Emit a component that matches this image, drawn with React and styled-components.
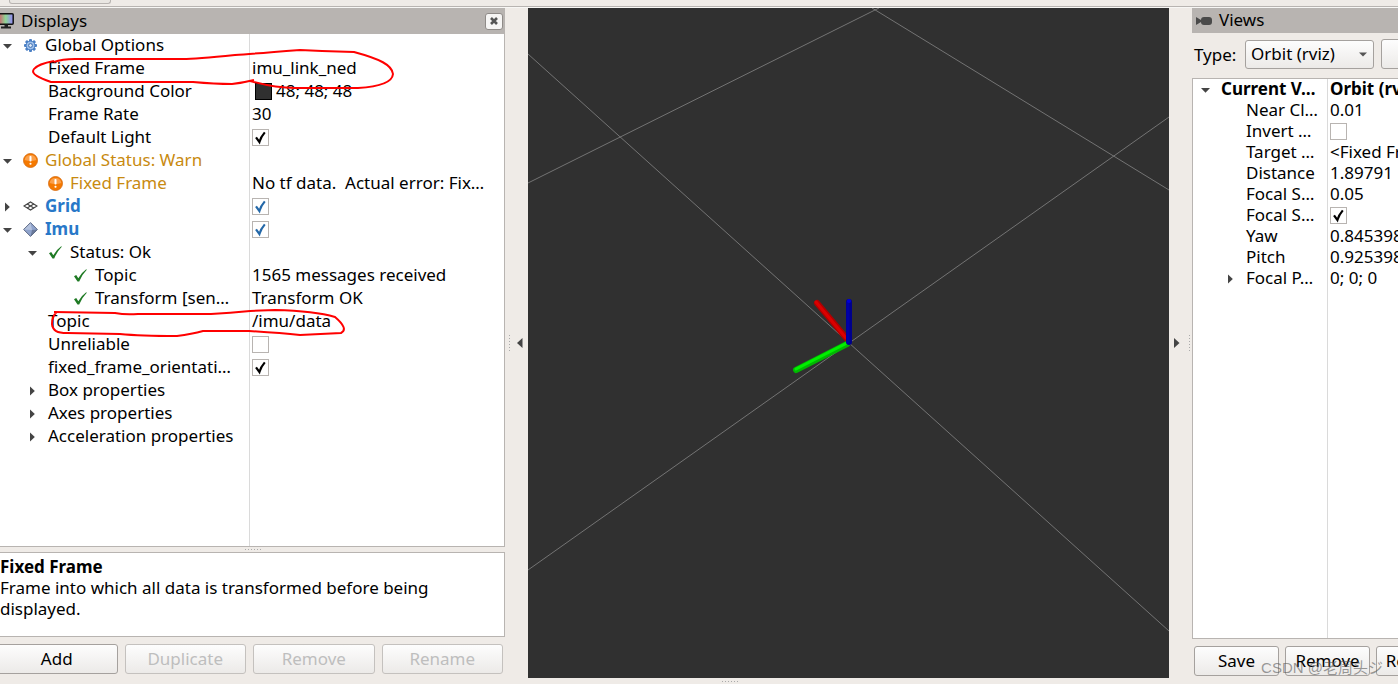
import { useState } from 'react'
import styled, { createGlobalStyle } from 'styled-components'

const displayRows = [
  { depth: 0, branch: 'open', icon: 'gear', name: 'Global Options' },
  { depth: 1, name: 'Fixed Frame', value: 'imu_link_ned' },
  { depth: 1, name: 'Background Color', value: '48; 48; 48', swatch: true },
  { depth: 1, name: 'Frame Rate', value: '30' },
  { depth: 1, name: 'Default Light', checkbox: true, checked: true },
  { depth: 0, branch: 'open', icon: 'warn', name: 'Global Status: Warn', tone: 'warn' },
  { depth: 1, icon: 'warn', name: 'Fixed Frame', tone: 'warn', value: 'No tf data.  Actual error: Fix…' },
  { depth: 0, branch: 'closed', icon: 'grid', name: 'Grid', tone: 'display', checkbox: true, checked: true },
  { depth: 0, branch: 'open', icon: 'imu', name: 'Imu', tone: 'display', checkbox: true, checked: true },
  { depth: 1, branch: 'open', icon: 'ok', name: 'Status: Ok' },
  { depth: 2, icon: 'ok', name: 'Topic', value: '1565 messages received' },
  { depth: 2, icon: 'ok', name: 'Transform [sen…', value: 'Transform OK' },
  { depth: 1, name: 'Topic', value: '/imu/data' },
  { depth: 1, name: 'Unreliable', checkbox: true, checked: false },
  { depth: 1, name: 'fixed_frame_orientati…', checkbox: true, checked: true },
  { depth: 1, branch: 'closed', name: 'Box properties' },
  { depth: 1, branch: 'closed', name: 'Axes properties' },
  { depth: 1, branch: 'closed', name: 'Acceleration properties' },
]

const viewRows = [
  { depth: 0, branch: 'open', name: 'Current V…', value: 'Orbit (rviz)', tone: 'current' },
  { depth: 1, name: 'Near Cl…', value: '0.01' },
  { depth: 1, name: 'Invert …', checkbox: true, checked: false },
  { depth: 1, name: 'Target …', value: '<Fixed Frame>' },
  { depth: 1, name: 'Distance', value: '1.89791' },
  { depth: 1, name: 'Focal S…', value: '0.05' },
  { depth: 1, name: 'Focal S…', checkbox: true, checked: true },
  { depth: 1, name: 'Yaw', value: '0.845398' },
  { depth: 1, name: 'Pitch', value: '0.925398' },
  { depth: 1, branch: 'closed', name: 'Focal P…', value: '0; 0; 0' },
]

const teeth = [0, 45, 90, 135, 180, 225, 270, 315]

function RowIcon({ type }) {
  if (type === 'gear') {
    return (
      <Icon viewBox="0 0 15 15">
        <g fill="#4a7fc4">
          {teeth.map((a) => (
            <rect key={a} x="6" y="1" width="3" height="4" rx="1" transform={`rotate(${a} 7.5 7.5)`} />
          ))}
        </g>
        <circle cx="7.5" cy="7.5" r="4.4" fill="#9fc0ea" stroke="#4a7fc4" strokeWidth="1" />
        <circle cx="7.5" cy="7.5" r="1.9" fill="#e4eefa" stroke="#3a6cb0" strokeWidth="1" />
      </Icon>
    )
  }
  if (type === 'warn') {
    return (
      <Icon viewBox="0 0 15 15">
        <circle cx="7.5" cy="7.5" r="7" fill="#f57900" stroke="#d66a0c" strokeWidth="0.8" />
        <path d="M1.6 7A6 6 0 0 1 13.4 7Q7.5 9 1.6 7Z" fill="#fba04a" />
        <rect x="6.5" y="3" width="2" height="5.6" rx="0.8" fill="#fff" />
        <rect x="6.5" y="9.8" width="2" height="2" rx="0.8" fill="#fff" />
      </Icon>
    )
  }
  if (type === 'grid') {
    return (
      <Icon viewBox="0 0 15 15" fill="none" stroke="#444" strokeWidth="1.2">
        <path d="M1 7 7.5 3 14 7 7.5 11Z" />
        <path d="M4.2 5 10.8 9M10.8 5 4.2 9" />
      </Icon>
    )
  }
  if (type === 'imu') {
    return (
      <Icon viewBox="0 0 15 15">
        <path d="M7.5 0.6 14.4 7.5 7.5 14.4 0.6 7.5Z" fill="#8fa3cc" />
        <path d="M7.5 0.6 9 8 0.6 7.5Z" fill="#b4c2de" />
        <path d="M9 8 14.4 7.5 7.5 14.4Z" fill="#6a7a9c" />
        <path d="M7.5 0.6 14.4 7.5 7.5 14.4 0.6 7.5Z" fill="none" stroke="#55617c" strokeWidth="0.9" />
      </Icon>
    )
  }
  return (
    <Icon viewBox="0 0 15 15">
      <path d="M1 8.2 3.2 7 5.3 10.2Q8.6 4.4 13.2 1.2L13.8 1.8Q9.2 6.4 6.2 13.4H4.5Z" fill="#1f7a24" />
    </Icon>
  )
}

function Check({ label, defaultChecked, tone }) {
  const [on, setOn] = useState(defaultChecked)
  return (
    <CheckCell>
      <CheckInput type="checkbox" aria-label={label} checked={on} onChange={(e) => setOn(e.target.checked)} />
      {on && (
        <CheckMark viewBox="0 0 17 17" $tone={tone}>
          <path d="M4 8.4 7.4 13Q8.8 8 12.8 3.4" />
        </CheckMark>
      )}
    </CheckCell>
  )
}

function PropertyTree({ rows, label, ...layout }) {
  return (
    <Tree {...layout}>
      <TreeTable aria-label={label}>
        <colgroup>
          <NameCol $width={layout.$split} />
          <col />
        </colgroup>
        <tbody>
          {rows.map((row, i) => (
            <TreeRow key={i} $height={layout.$row}>
              <td>
                <NameCell $depth={row.depth} $tone={row.tone}>
                  <Branch $width={layout.$branch}>
                    {row.branch && (
                      <BranchButton aria-label={`Toggle ${row.name}`}>
                        <svg width="10" height="10" viewBox="0 0 10 10" fill="#444">
                          <path d={row.branch === 'open' ? 'M0 3H9L4.5 7.8Z' : 'M2 0.5V9.5L6.8 5Z'} />
                        </svg>
                      </BranchButton>
                    )}
                  </Branch>
                  {row.icon && <RowIcon type={row.icon} />}
                  <CellText>{row.name}</CellText>
                </NameCell>
              </td>
              <td>
                <ValueCell $tone={row.tone}>
                  {row.checkbox && <Check label={row.name} defaultChecked={row.checked} tone={row.tone} />}
                  {row.swatch && <Swatch />}
                  {row.value && <CellText>{row.value}</CellText>}
                </ValueCell>
              </td>
            </TreeRow>
          ))}
        </tbody>
      </TreeTable>
    </Tree>
  )
}

function RenderView() {
  return (
    <Viewport viewBox="0 0 641 670" preserveAspectRatio="xMidYMid slice" role="img" aria-label="3D view">
      <g stroke="#858585" strokeWidth="0.8">
        <path d="M0 46 641 623M0 562 641 109M0 175 351 0M344 0 641 182" />
      </g>
      <g strokeLinecap="round" strokeWidth="6">
        <path d="M289 295 319 331" stroke="#b00000" />
        <path d="M288 294 318 330" stroke="#dc0000" strokeWidth="3" />
        <path d="M268 362 319 336" stroke="#00b800" />
        <path d="M268 361 319 335" stroke="#00f000" strokeWidth="3" />
        <path d="M321 294V334" stroke="#00008c" />
        <path d="M320 294V334" stroke="#0000a8" strokeWidth="3" />
        <circle cx="321" cy="293" r="2" fill="#0000d8" />
      </g>
    </Viewport>
  )
}

export default function App() {
  return (
    <Window>
      <GlobalStyle />
      <ToolbarEdge>
        <ToolbarTab />
      </ToolbarEdge>
      <Workspace>
        <Dock>
          <DockTitle $tall>
            <svg width="15" height="17" viewBox="0 0 15 17">
              <defs>
                <linearGradient id="screen">
                  <stop offset="0.1" stopColor="#c86a70" />
                  <stop offset="0.5" stopColor="#8fd694" />
                  <stop offset="0.9" stopColor="#9494e8" />
                </linearGradient>
              </defs>
              <rect x="-2" y="0.8" width="15.2" height="10.4" rx="1" fill="url(#screen)" stroke="#111" strokeWidth="1.5" />
              <path d="M4.5 11.5H8V13.5H11V15.5H1V13.5H4.5Z" fill="#222" />
            </svg>
            <h2>Displays</h2>
            <CloseButton aria-label="Close displays">
              <svg width="8" height="8" viewBox="0 0 8 8" stroke="#555" strokeWidth="2.6">
                <path d="M1 1 7 7M7 1 1 7" />
              </svg>
            </CloseButton>
          </DockTitle>
          <PropertyTree rows={displayRows} label="Displays" $split={249} $row={23} $branch={23} $arrow={3} />
          <Splitter>
            <Dots />
          </Splitter>
          <Description>
            <strong>Fixed Frame</strong>
            <p>Frame into which all data is transformed before being displayed.</p>
          </Description>
          <DisplayButtons>
            <Button>Add</Button>
            <Button disabled>Duplicate</Button>
            <Button disabled>Remove</Button>
            <Button disabled>Rename</Button>
          </DisplayButtons>
          <Annotation viewBox="0 0 505 676">
            <path d="M54 53Q38 56 34 61C30 66 40 70 51 74L193 74Q215 76 232 76Q242 75 254 72M250 73Q275 80 295 80L358 80Q392 78 393 66C392 57 380 51 354 44L322 43 300 42Q250 46 235 47Q195 51 183 51L75 51Q62 51 54 54" />
            <path d="M57 304Q52 308 52 316C53 323 57 325 67 325L120 326Q140 328 177 328Q192 326 203 323L249 323Q280 325 300 327L341 325Q349 321 335 309Q315 303 275 302L250 303Q230 305 211 306L138 306Q125 307 115 305L54 304" />
          </Annotation>
        </Dock>
        <Handle $side="left">
          <svg width="6" height="10" viewBox="0 0 6 10" fill="#444">
            <path d="M5.5 0V10L0 5Z" />
          </svg>
        </Handle>
        <Center>
          <RenderView />
        </Center>
        <Handle $side="right">
          <svg width="6" height="10" viewBox="0 0 6 10" fill="#444">
            <path d="M0 0V10L5.5 5Z" />
          </svg>
        </Handle>
        <Dock>
          <DockTitle $inset>
            <svg width="17" height="10" viewBox="0 0 17 10" fill="#4a4a4a">
              <path d="M0 1 5 4V6L0 9Z" />
              <rect x="5" y="1" width="11" height="8" rx="3" />
            </svg>
            <h2>Views</h2>
          </DockTitle>
          <TypeRow>
            <label htmlFor="view-type">Type:</label>
            <SelectBox>
              <Select id="view-type" defaultValue="orbit">
                <option value="orbit">Orbit (rviz)</option>
              </Select>
              <svg width="8" height="5" viewBox="0 0 8 5" fill="#555">
                <path d="M0 0.5H8L4 4.5Z" />
              </svg>
            </SelectBox>
            <Button>Zero</Button>
          </TypeRow>
          <PropertyTree rows={viewRows} label="Current view" $framed $split={134} $row={21} $branch={28} $arrow={8} />
          <ViewButtons>
            <Button>Save</Button>
            <Button>Remove</Button>
            <Button>Rename</Button>
          </ViewButtons>
        </Dock>
      </Workspace>
      <BottomEdge>
        <Dots />
      </BottomEdge>
      <Watermark>CSDN @老周头ジ</Watermark>
    </Window>
  )
}

const GlobalStyle = createGlobalStyle`
  * {
    box-sizing: border-box;
  }
  body {
    margin: 0;
    background: #efebe7;
    color: #000;
    font-family: "Noto Sans", "Noto Sans CJK SC", sans-serif;
    font-size: 17px;
    line-height: 21px;
  }
  button, select, input {
    font: inherit;
    color: inherit;
    margin: 0;
  }
  h2, p {
    margin: 0;
    font-size: 17px;
    font-weight: 400;
  }
  svg {
    display: block;
    flex: none;
  }
`

const Window = styled.div`
  position: relative;
  display: flex;
  flex-direction: column;
  min-height: 100vh;
  overflow: hidden;
`

const ToolbarEdge = styled.div`
  height: 8px;
  padding-left: 9px;
  border-bottom: 1px solid #f8f7f5;
  box-shadow: inset 0 -1px #b8b4b1;
`

const ToolbarTab = styled.div`
  width: 102px;
  height: 4px;
  border: 1px solid #b8b4b1;
  border-top: 0;
  border-radius: 0 0 3px 3px;
  background: #e9e6e2;
`

const Workspace = styled.div`
  flex: 1;
  display: grid;
  grid-template-columns: 505px 23px minmax(0, 1fr) 23px 206px;
`

const Dock = styled.section`
  position: relative;
  display: flex;
  flex-direction: column;
  min-width: 0;
  overflow: hidden;
`

const DockTitle = styled.header`
  display: flex;
  align-items: center;
  gap: 6px;
  height: ${(p) => (p.$tall ? 26 : 25)}px;
  padding: 0 2px 0 ${(p) => (p.$inset ? 4 : 0)}px;
  background: #b8b4b1;

  h2 {
    padding-bottom: 2px;
  }
`

const CloseButton = styled.button`
  display: grid;
  place-items: center;
  width: 18px;
  height: 17px;
  margin-left: auto;
  padding: 0;
  border: 1px solid #8f8b88;
  border-radius: 3px;
  background: #f6f5f4;
`

const Tree = styled.div`
  flex: 1;
  border: 1px solid #b8b4b1;
  border-width: ${(p) => (p.$framed ? '1px 0 1px 1px' : '0 1px 1px 0')};
  background: linear-gradient(#dadada, #dadada) ${(p) => p.$split}px 0 / 1px 100% no-repeat #fff;

  button {
    margin-left: ${(p) => p.$arrow}px;
  }
`

const TreeTable = styled.table`
  width: 100%;
  table-layout: fixed;
  border-collapse: collapse;

  td {
    padding: 0;
    overflow: hidden;
    white-space: pre;
  }
`

const NameCol = styled.col`
  width: ${(p) => p.$width}px;
`

const TreeRow = styled.tr`
  height: ${(p) => p.$height}px;
`

const tones = { warn: '#c88a10', display: '#2878c8' }

const NameCell = styled.div`
  display: flex;
  align-items: center;
  padding-left: ${(p) => p.$depth * 25}px;
  color: ${(p) => tones[p.$tone] || '#000'};
  font-weight: ${(p) => (p.$tone === 'display' || p.$tone === 'current' ? 700 : 400)};
`

const CellText = styled.span`
  padding-bottom: 2px;
  line-height: 19px;
`

const Branch = styled.span`
  flex: none;
  width: ${(p) => p.$width}px;
`

const BranchButton = styled.button`
  display: block;
  padding: 0;
  border: 0;
  background: none;
`

const Icon = styled.svg`
  width: 15px;
  height: 15px;
  margin-right: 7px;
`

const ValueCell = styled.div`
  display: flex;
  align-items: center;
  padding-left: 3px;
  font-weight: ${(p) => (p.$tone === 'current' ? 700 : 400)};
`

const Swatch = styled.span`
  width: 17px;
  height: 17px;
  margin: 0 4px 0 3px;
  border: 1px solid #000;
  background: #303030;
`

const CheckCell = styled.span`
  display: grid;

  > * {
    grid-area: 1 / 1;
  }
`

const CheckInput = styled.input`
  appearance: none;
  width: 17px;
  height: 17px;
  border: 1px solid #b8b4b1;
  background: #fff;
`

const CheckMark = styled.svg`
  width: 17px;
  height: 17px;
  fill: none;
  stroke: ${(p) => (p.$tone === 'display' ? '#2468a8' : '#000')};
  stroke-width: 2.2;
  pointer-events: none;
`

const Splitter = styled.div`
  display: grid;
  place-items: center;
  height: 5px;
`

const BottomEdge = styled.div`
  display: grid;
  grid-template-columns: 730px;
  justify-content: center;
  justify-items: end;
  align-items: center;
  height: 6px;
  padding-right: 652px;
`

const Dots = styled.span`
  width: 16px;
  height: 1px;
  background: repeating-linear-gradient(90deg, #aaa 0 1px, transparent 1px 3px);
`

const Description = styled.div`
  height: 85px;
  padding: 3px 0;
  border: 1px solid #b8b4b1;
  border-left: 0;
  background: #fff;
`

const Button = styled.button`
  height: 30px;
  padding: 0 0 2px;
  border: 1px solid #a5a19e;
  border-radius: 3px;
  background: linear-gradient(#fdfdfd, #eceae8);

  &:disabled {
    border-color: #c4c1be;
    color: #bebebe;
  }
`

const DisplayButtons = styled.div`
  display: grid;
  grid-template-columns: repeat(4, 1fr);
  gap: 7px;
  margin-left: -4px;
  padding: 7px 2px 4px 0;
`

const Handle = styled.div`
  display: flex;
  align-items: center;
  justify-content: ${(p) => (p.$side === 'left' ? 'flex-end' : 'flex-start')};
  padding: 0 5px;
  background: repeating-linear-gradient(#aaa 0 1px, transparent 1px 3px)
    ${(p) => (p.$side === 'left' ? '4px' : '20px')} 50% / 1px 16px no-repeat;
`

const Center = styled.main`
  display: flex;
  flex-direction: column;
  min-width: 0;
`

const Viewport = styled.svg`
  flex: 1 1 0;
  width: 100%;
  min-height: 0;
  background: #303030;
`

const TypeRow = styled.div`
  display: grid;
  grid-template-columns: 44px 129px 85px;
  gap: 7px;
  align-items: center;
  padding: 6px 0 9px 2px;
`

const SelectBox = styled.div`
  display: grid;
  align-items: center;

  > * {
    grid-area: 1 / 1;
  }

  svg {
    justify-self: end;
    margin-right: 7px;
    pointer-events: none;
  }
`

const Select = styled.select`
  appearance: none;
  width: 100%;
  height: 29px;
  padding: 0 5px 2px;
  border: 1px solid #a5a19e;
  border-radius: 3px;
  background: linear-gradient(#fdfdfd, #eceae8);
`

const ViewButtons = styled.div`
  display: grid;
  grid-template-columns: repeat(3, 85px);
  gap: 6px;
  padding: 7px 0 2px 2px;
`

const Annotation = styled.svg`
  position: absolute;
  top: 0;
  left: 0;
  width: 505px;
  height: 676px;
  fill: none;
  stroke: #f00;
  stroke-width: 2;
  pointer-events: none;
`

const Watermark = styled.div`
  position: absolute;
  right: 15px;
  bottom: 6px;
  color: rgba(90, 90, 90, 0.6);
  font-family: "Liberation Sans", "Noto Sans CJK SC", sans-serif;
  font-size: 15px;
  pointer-events: none;
`
